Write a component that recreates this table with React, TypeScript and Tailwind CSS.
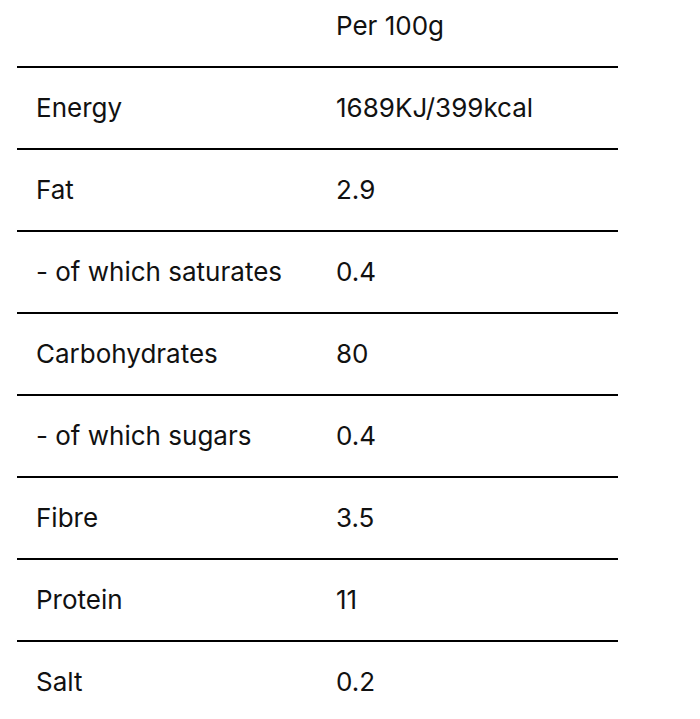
import React from 'react';

const rows: { label: string; value: string }[] = [
    { label: 'Energy', value: '1689KJ/399kcal' },
    { label: 'Fat', value: '2.9' },
    { label: '- of which saturates', value: '0.4' },
    { label: 'Carbohydrates', value: '80' },
    { label: '- of which sugars', value: '0.4' },
    { label: 'Fibre', value: '3.5' },
    { label: 'Protein', value: '11' },
    { label: 'Salt', value: '0.2' },
];

const App: React.FC = () => {
    return (
        <div className="min-h-screen bg-white text-[#111] font-['Inter',sans-serif] text-[26px] leading-[32px]">
            <div className="ml-[17px] w-[601px]">
                <div className="h-[68px] border-b-2 border-black flex items-start pt-[10px]">
                    <div className="w-[319px]" />
                    <div>Per 100g</div>
                </div>
                {rows.map((row) => (
                    <div key={row.label} className="h-[82px] border-b-2 border-black flex items-center">
                        <div className="w-[319px] pl-[19px]">{row.label}</div>
                        <div>{row.value}</div>
                    </div>
                ))}
            </div>
        </div>
    );
};

export default App;
